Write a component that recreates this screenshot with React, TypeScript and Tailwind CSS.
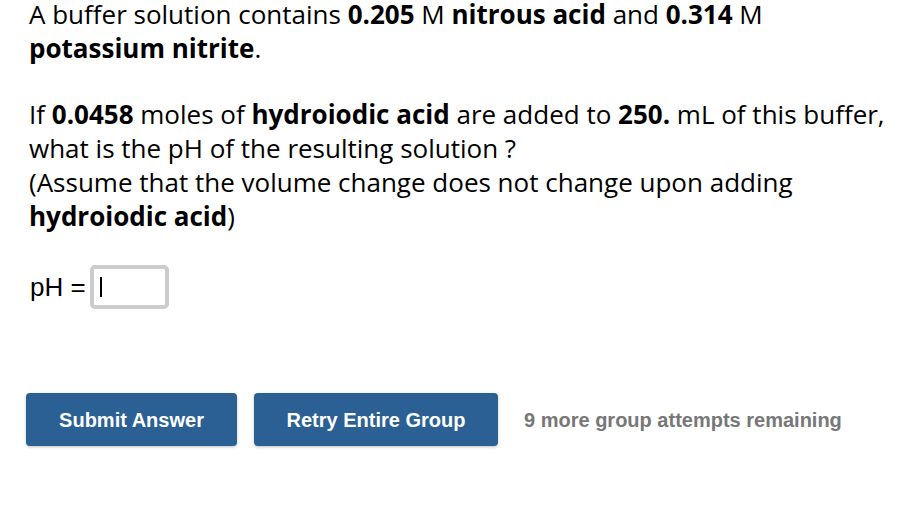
export default function App() {
  return (
    <div className="w-[900px] h-[524px] bg-white text-black">
      <div className="pl-[29px] font-['Open_Sans',sans-serif] text-[26px] leading-[34px]">
        <p className="-mt-[3px]">
          A buffer solution contains <b>0.205</b> M <b>nitrous acid</b> and <b>0.314</b> M
          <br />
          <b>potassium nitrite</b>.
        </p>
        <p className="mt-[32px]">
          If <b>0.0458</b> moles of <b>hydroiodic acid</b> are added to <b>250.</b> mL of this buffer,
          <br />
          what is the pH of the resulting solution ?
          <br />
          (Assume that the volume change does not change upon adding
          <br />
          <b>hydroiodic acid</b>)
        </p>
      </div>

      {/* answer input */}
      <div className="mt-[32px] ml-[30px] flex items-center gap-[4px] font-['Liberation_Sans',Arial,sans-serif] text-[26px]">
        <span>pH =</span>
        <div className="w-[79px] h-[44px] rounded-[5px] border-[4px] border-[#cccccc] bg-white flex items-center pl-[6px]">
          <span className="w-[2px] h-[20px] bg-black" />
        </div>
      </div>

      {/* actions */}
      <div className="mt-[84px] ml-[26px] flex items-center gap-[17px] font-['Liberation_Sans',Arial,sans-serif] font-bold text-[20px]">
        <button className="w-[211px] h-[53px] rounded-[4px] bg-[#2a6094] text-white shadow-[0_1px_3px_rgba(0,0,0,0.25)]">
          Submit Answer
        </button>
        <button className="w-[244px] h-[53px] rounded-[4px] bg-[#2a6094] text-white shadow-[0_1px_3px_rgba(0,0,0,0.25)]">
          Retry Entire Group
        </button>
        <span className="ml-[9px] text-[#777777]">9 more group attempts remaining</span>
      </div>
    </div>
  )
}
